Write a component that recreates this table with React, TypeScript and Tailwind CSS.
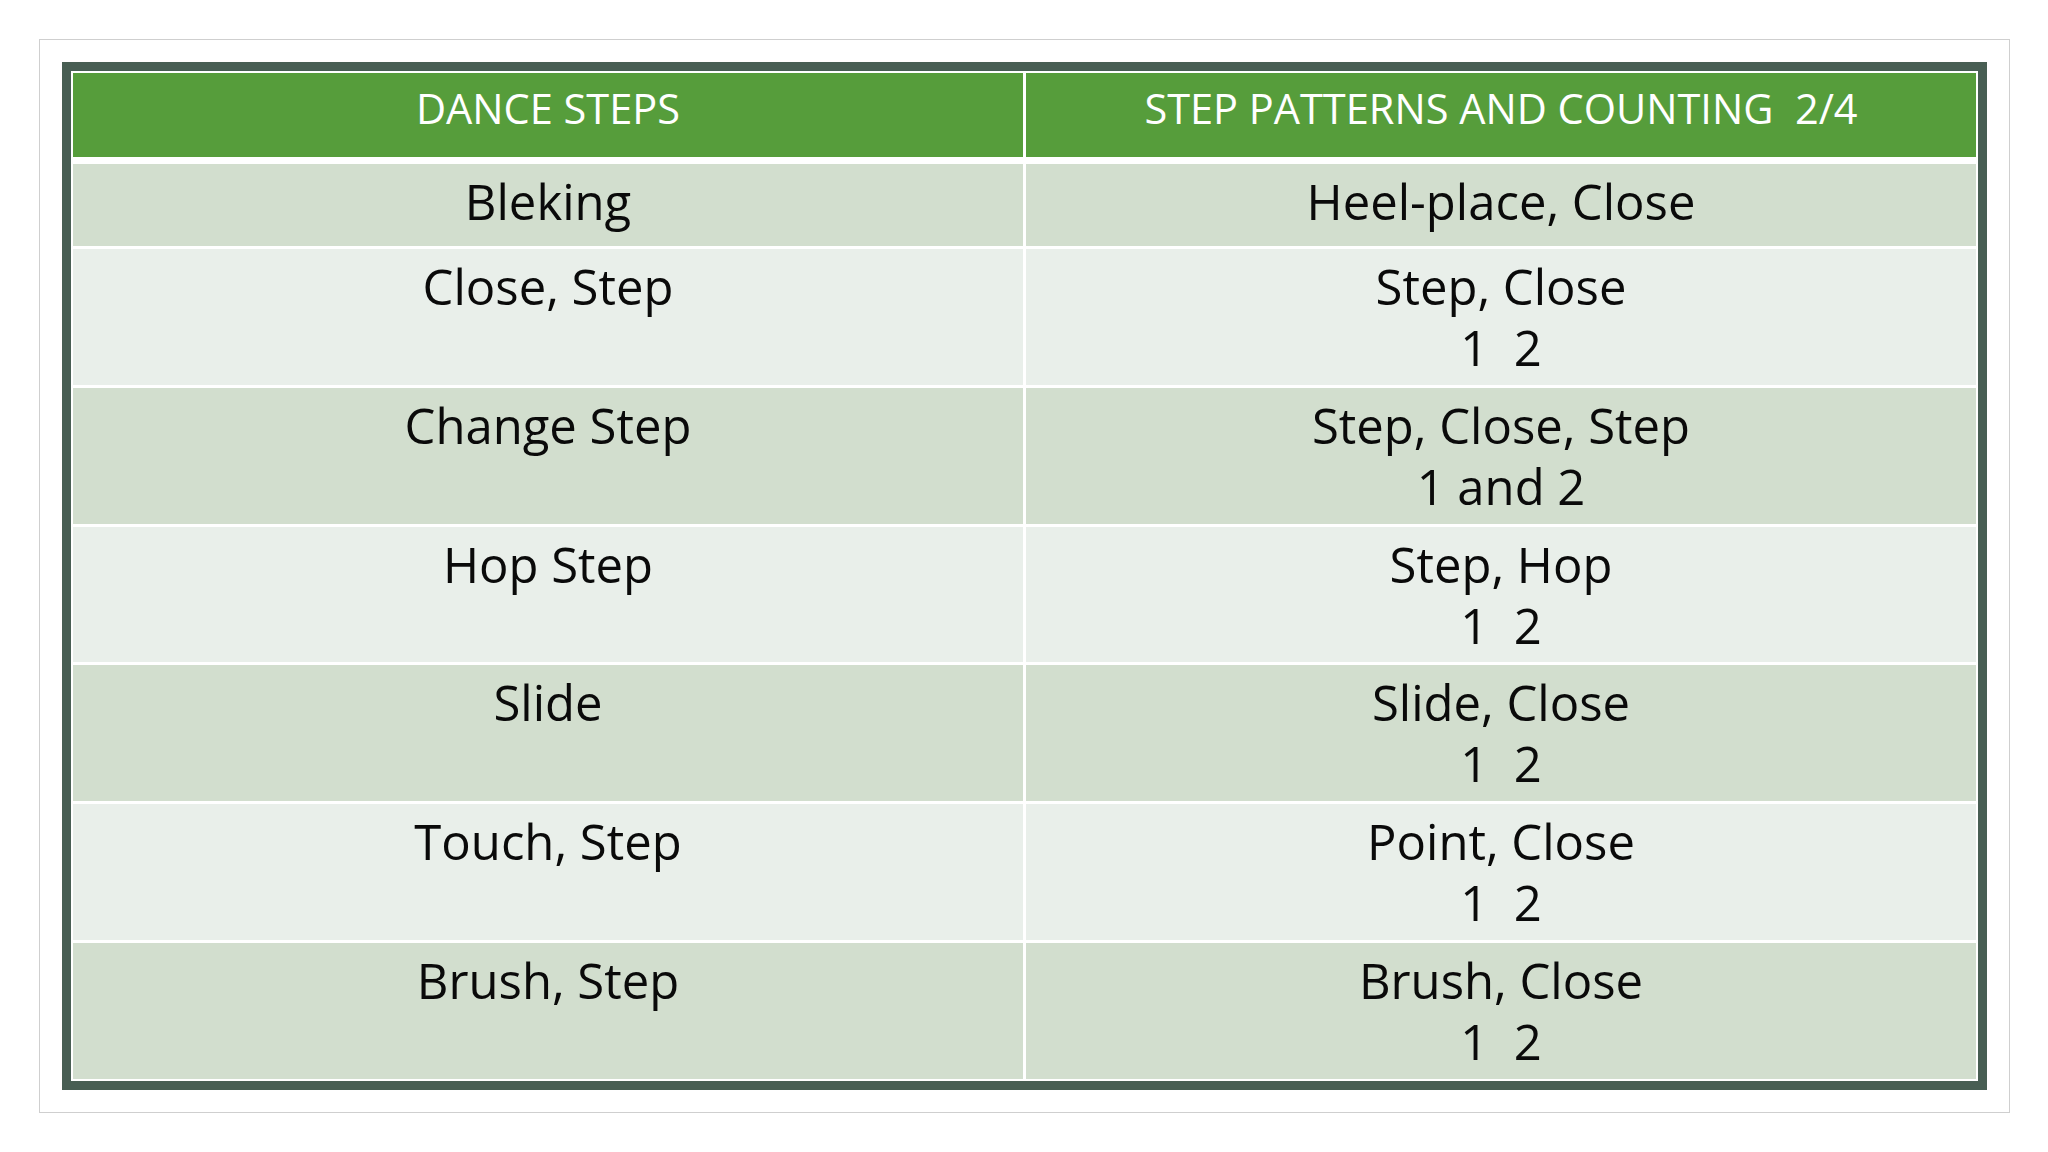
import React from 'react'

type Row = {
  step: string
  pattern: string
  count?: string
}

const rows: Row[] = [
  { step: 'Bleking', pattern: 'Heel-place, Close' },
  { step: 'Close, Step', pattern: 'Step, Close', count: '1  2' },
  { step: 'Change Step', pattern: 'Step, Close, Step', count: '1 and 2' },
  { step: 'Hop Step', pattern: 'Step, Hop', count: '1  2' },
  { step: 'Slide', pattern: 'Slide, Close', count: '1  2' },
  { step: 'Touch, Step', pattern: 'Point, Close', count: '1  2' },
  { step: 'Brush, Step', pattern: 'Brush, Close', count: '1  2' },
]

const cell = 'px-4 pt-[7px] text-center text-[49px] leading-[61px] text-[#0a0a0a] whitespace-pre'

export default function App() {
  return (
    <div
      className="min-h-screen bg-white pt-[39px] pl-[39px]"
      style={{ fontFamily: '"Open Sans", "Noto Sans", sans-serif' }}
    >
      <div className="w-[1971px] h-[1074px] border border-[#cfcfcf] p-[22px]">
        {/* table frame */}
        <div className="h-full bg-[#485e53] p-[9px]">
          <div className="h-full bg-white p-[2px] flex flex-col gap-[3px]">
            <div className="grid grid-cols-2 gap-[3px] h-[84px] mb-[4px]">
              <div className="bg-[#569d3b] pt-[7px] text-center text-[41.5px] leading-[56px] text-white">
                DANCE STEPS
              </div>
              <div className="bg-[#569d3b] pt-[7px] text-center text-[41.5px] leading-[56px] text-white whitespace-pre">
                STEP PATTERNS AND COUNTING  2/4
              </div>
            </div>

            {rows.map((r, i) => (
              <div
                key={r.step}
                className={`grid grid-cols-2 gap-[3px] ${i === 0 ? 'h-[82px]' : 'flex-1'}`}
              >
                <div className={`${cell} ${i % 2 === 0 ? 'bg-[#d2dece]' : 'bg-[#e9efea]'}`}>
                  {r.step}
                </div>
                <div className={`${cell} ${i % 2 === 0 ? 'bg-[#d2dece]' : 'bg-[#e9efea]'}`}>
                  <div>{r.pattern}</div>
                  {r.count && <div>{r.count}</div>}
                </div>
              </div>
            ))}
          </div>
        </div>
      </div>
    </div>
  )
}
